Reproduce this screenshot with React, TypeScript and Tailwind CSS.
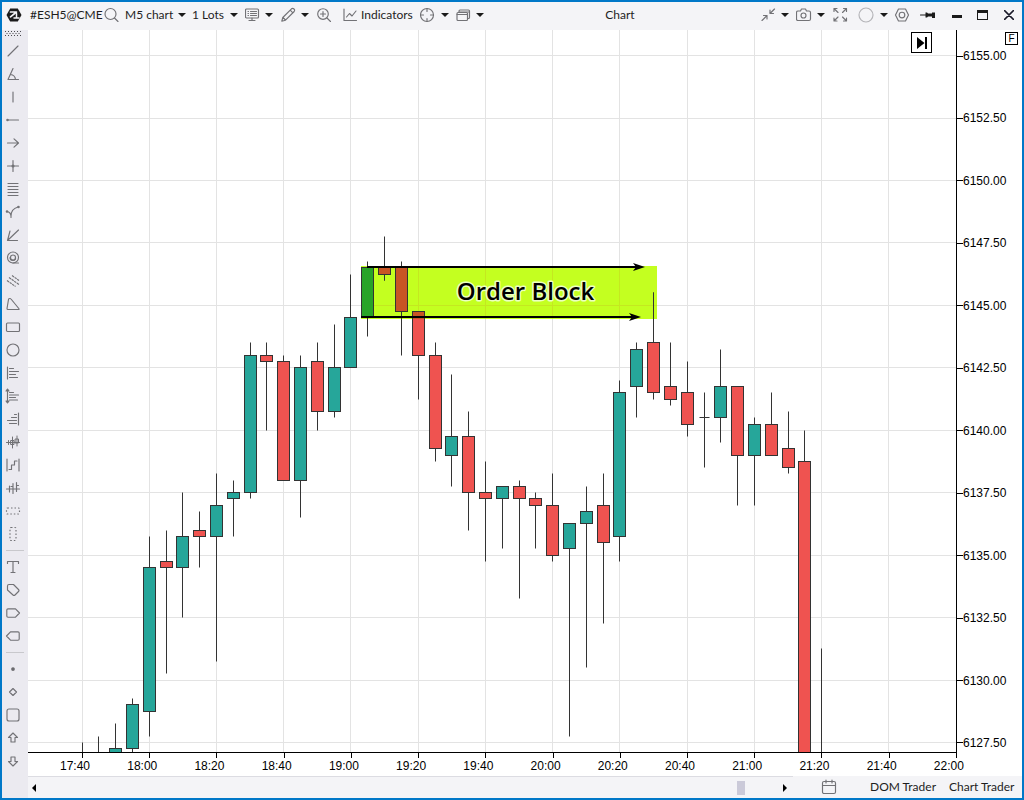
import React from "react";

type Bar = { high: number; top: number; bottom: number; low: number; up: boolean };

const bar = (high: number, top: number, bottom: number, low: number, up = false): Bar => ({
  high,
  top,
  bottom,
  low,
  up,
});

// One five-minute bar per entry, starting at 17:40. Values are y positions on the plot.
const bars: Bar[] = [
  bar(742, 762, 762, 762),
  bar(736, 762, 762, 762),
  bar(723, 748, 762, 762, true),
  bar(698, 704, 748, 762, true),
  bar(536, 567, 711, 736, true),
  bar(530, 561, 567, 673),
  bar(492, 536, 567, 617, true),
  bar(511, 530, 536, 567),
  bar(473, 505, 536, 661, true),
  bar(480, 492, 498, 536, true),
  bar(342, 355, 492, 498, true),
  bar(342, 355, 361, 430),
  bar(355, 361, 480, 480),
  bar(355, 367, 480, 517, true),
  bar(342, 361, 411, 430),
  bar(324, 367, 411, 417, true),
  bar(274, 317, 367, 367, true),
  bar(261, 267, 317, 336, true),
  bar(236, 267, 274, 280),
  bar(261, 267, 311, 355),
  bar(311, 311, 355, 399),
  bar(342, 355, 448, 461),
  bar(374, 436, 455, 486, true),
  bar(411, 436, 492, 530),
  bar(461, 492, 498, 561),
  bar(486, 486, 498, 548, true),
  bar(480, 486, 498, 598),
  bar(492, 498, 505, 548),
  bar(473, 505, 555, 561),
  bar(523, 523, 548, 736, true),
  bar(486, 511, 523, 667, true),
  bar(473, 505, 542, 623),
  bar(380, 392, 536, 561, true),
  bar(342, 349, 386, 417, true),
  bar(292, 342, 392, 399),
  bar(342, 386, 399, 405),
  bar(361, 392, 424, 436),
  bar(392, 417, 417, 467),
  bar(349, 386, 417, 442, true),
  bar(386, 386, 455, 505),
  bar(417, 424, 455, 505, true),
  bar(392, 424, 455, 455),
  bar(411, 448, 467, 473),
  bar(430, 461, 762, 762),
  bar(648, 762, 762, 762),
];

const prices = [
  "6155.00", "6152.50", "6150.00", "6147.50", "6145.00", "6142.50",
  "6140.00", "6137.50", "6135.00", "6132.50", "6130.00", "6127.50",
];

const times = [
  "17:40", "18:00", "18:20", "18:40", "19:00", "19:20", "19:40",
  "20:00", "20:20", "20:40", "21:00", "21:20", "21:40", "22:00",
];

const barX = (index: number) => Math.floor(82.005 + index * 16.812) + 0.5;
const priceY = (index: number) => Math.floor(55.6 + index * 62.44) + 0.5;

function Candles({ up, down }: { up: string; down: string }) {
  return (
    <g stroke="#333333" strokeWidth="1">
      {bars.map((b, i) => {
        const x = barX(i);
        return (
          <g key={i}>
            <line x1={x} x2={x} y1={b.high + 0.5} y2={b.low + 0.5} />
            {b.top === b.bottom ? (
              <line x1={x - 5} x2={x + 5} y1={b.top + 0.5} y2={b.top + 0.5} />
            ) : (
              <rect x={x - 6} y={b.top + 0.5} width="12" height={b.bottom - b.top} fill={b.up ? up : down} />
            )}
          </g>
        );
      })}
    </g>
  );
}

function Plot() {
  return (
    <svg
      viewBox="28 30 928 722"
      preserveAspectRatio="none"
      className="absolute inset-0 h-full w-full"
      role="img"
      aria-label="Five-minute candlestick chart"
    >
      <defs>
        <clipPath id="block">
          <rect x="361" y="266" width="296" height="53" />
        </clipPath>
      </defs>
      <g stroke="#e3e3e3">
        {prices.map((p, i) => (
          <line key={p} x1="28" x2="956" y1={priceY(i)} y2={priceY(i)} />
        ))}
        {times.slice(0, 13).map((t, i) => (
          <line key={t} x1={barX(i * 4)} x2={barX(i * 4)} y1="30" y2="752" />
        ))}
      </g>
      <rect x="361" y="266" width="296" height="53" fill="#c4ff20" />
      <g clipPath="url(#block)" stroke="#c4e820">
        <line x1="361" x2="657" y1={priceY(4)} y2={priceY(4)} />
        {[20, 24, 28, 32].map((i) => (
          <line key={i} x1={barX(i)} x2={barX(i)} y1="266" y2="319" />
        ))}
      </g>
      <Candles up="#26a69a" down="#ef5350" />
      <g clipPath="url(#block)">
        <Candles up="#28a428" down="#c85424" />
      </g>
      <g stroke="#000000" strokeWidth="2">
        <line x1="367" x2="636" y1="267" y2="267" />
        <line x1="361" x2="632" y1="317" y2="317" />
      </g>
      <path d="M645 267l-12-4 3 4-3 4zM641 317l-12-4 3 4-3 4z" />
      <text
        x="525.5"
        y="300"
        textAnchor="middle"
        className="font-['Open_Sans','Noto_Sans',sans-serif] text-[24px] font-semibold"
        fill="#000000"
        stroke="#ecffc0"
        strokeWidth="3"
        strokeLinejoin="round"
        paintOrder="stroke"
      >
        Order Block
      </text>
    </svg>
  );
}

function Icon({ children, className = "h-4 w-4" }: { children: React.ReactNode; className?: string }) {
  return (
    <svg
      viewBox="0 0 16 16"
      className={`shrink-0 ${className}`}
      fill="none"
      stroke="#727276"
      strokeWidth="1.15"
      strokeLinecap="round"
      strokeLinejoin="round"
      aria-hidden="true"
    >
      {children}
    </svg>
  );
}

function Caret({ label, className }: { label: string; className: string }) {
  return (
    <button type="button" aria-label={label} className={`flex h-full items-center ${className}`}>
      <svg viewBox="0 0 8 4" className="h-1 w-2" aria-hidden="true">
        <path d="M0 0h8L4 4z" fill="#1a1a1a" />
      </svg>
    </button>
  );
}

function Tool({ label, className, children }: { label: string; className: string; children: React.ReactNode }) {
  return (
    <button type="button" aria-label={label} className={`flex h-full items-center ${className}`}>
      {children}
    </button>
  );
}

function TitleBar() {
  return (
    <header className="flex h-7 shrink-0 items-center bg-[#f4f4f7] pb-0.5 whitespace-nowrap">
      <div className="flex h-full items-center">
        <div className="flex w-7 items-center pl-1">
          <Icon>
            <path d="M4.200 1.500h7.600l3.700 6.500-3.700 6.500H4.200L.5 8z" fill="#1c1c1c" stroke="none" />
            <path d="M4.500 5h6L4.500 9.800" stroke="#f4f4f7" strokeWidth="1.700" />
            <path d="M10.500 6.500v4.500M8 11h5" stroke="#f4f4f7" strokeWidth="1.500" />
          </Icon>
        </div>
        <span className="w-[74px]">#ESH5@CME</span>
        <Tool label="Search instrument" className="w-[21px]">
          <Icon><circle cx="6.500" cy="7" r="5.500" /><path d="M10.500 11l3.500 3.500" /></Icon>
        </Tool>
        <button type="button" className="w-[53px] text-left">M5 chart</button>
        <Caret label="Choose timeframe" className="w-3.5" />
        <button type="button" className="w-[38px] text-left">1 Lots</button>
        <Caret label="Choose lots" className="w-[15px]" />
        <Tool label="Display" className="w-5">
          <Icon>
            <rect x=".5" y="2" width="13" height="9" rx="1" />
            <path d="M3 4.500h.5M5.500 4.500h6M3 6.500h.5M5.500 6.500h6M3 8.500h.5M5.500 8.500h6M7 11v2.500M4 13.500h6" />
          </Icon>
        </Tool>
        <Caret label="Display options" className="w-4" />
        <Tool label="Draw" className="w-5">
          <Icon><path d="M.8 14.200l1-3.700L10.500 1.800q1.200-1 2.500.2t.2 2.500L4.500 13.200zM9.200 3.200l2.700 2.700M2 10.500l2.500 2.500" /></Icon>
        </Tool>
        <Caret label="Drawing options" className="w-4" />
        <Tool label="Zoom in" className="w-[26px]">
          <Icon><circle cx="6" cy="7" r="5.300" /><path d="M10 11l3.500 3.500M6 4.500v5M3.500 7h5" /></Icon>
        </Tool>
        <button type="button" className="flex w-[77px] items-center gap-0.5">
          <Icon><path d="M1 2v11.500h12.500M3.500 10l3-3.500L9 9l4-5" /></Icon>
          Indicators
        </button>
        <Tool label="Crosshair" className="w-[21px]">
          <Icon><circle cx="7" cy="8" r="6.500" /><path d="M7 1.500v3M7 11.500v3M.5 8h3M10.500 8h3" /></Icon>
        </Tool>
        <Caret label="Crosshair options" className="w-[15px]" />
        <Tool label="Windows" className="w-5">
          <Icon>
            <rect x="1" y="5.500" width="10.500" height="8" rx="1" />
            <path d="M1 7.500h10.500M3 5.500V4q0-1 1-1h8.500q1 0 1 1v6.500q0 1-1 1h-1M3.500 5h10" />
          </Icon>
        </Tool>
        <Caret label="Window options" className="w-[9px]" />
      </div>
      <h1 className="flex-1 pr-1.5 text-center">Chart</h1>
      <div className="flex h-full items-center">
        <Tool label="Collapse" className="w-5">
          <Icon><path d="M1 13.500l5-5M2.500 8.500H6V12M13.500 2L9 6.500M9 3v3.500h3.500" /></Icon>
        </Tool>
        <Caret label="Collapse options" className="w-[15px]" />
        <Tool label="Screenshot" className="w-[21px]">
          <Icon>
            <path d="M2 4h2.500L5.500 2h4l1 2H13q1.500 0 1.500 1.500v6.500q0 1.500-1.500 1.500H2Q.5 13.500.5 12V5.500Q.5 4 2 4z" />
            <circle cx="7.500" cy="8.500" r="2.500" />
          </Icon>
        </Tool>
        <Caret label="Screenshot options" className="w-4" />
        <Tool label="Full screen" className="w-[25px]">
          <Icon>
            <path d="M5 5.500L1 1.500M1 4.500v-3h3M9.500 5.500l4-4M10.500 1.500h3v3M5 10l-4 4M1 11v3h3M9.500 10l4 4M10.500 14h3v-3" />
          </Icon>
        </Tool>
        <Tool label="Link colour" className="w-[22px]">
          <Icon><circle cx="8" cy="8" r="7" stroke="#b4b4b8" /></Icon>
        </Tool>
        <Caret label="Link options" className="w-3.5" />
        <Tool label="Settings" className="w-[26px]">
          <Icon>
            <path d="M4.500 2h7l1 2 2 4-2 4-1 2h-7l-1-2-2-4 2-4z" />
            <circle cx="8" cy="8" r="2.800" />
          </Icon>
        </Tool>
        <Tool label="Pin window" className="w-8">
          <Icon><path d="M.5 8H6" stroke="#1a1a1a" /><path d="M5.500 5.500v5h1.500l1-1h4v1.500h3V5.500h-3v1H8l-1-1z" fill="#1a1a1a" stroke="none" /></Icon>
        </Tool>
        <Tool label="Minimize" className="w-[25px]">
          <span className="mt-0.5 h-[3px] w-2.5 bg-[#1a1a1a]" />
        </Tool>
        <Tool label="Maximize" className="w-[27px]">
          <span className="h-2.5 w-[11px] border border-t-[3px] border-[#1a1a1a]" />
        </Tool>
        <Tool label="Close" className="w-[18px]">
          <Icon className="h-2.5 w-2.5"><path d="M1 1l14 14M15 1L1 15" stroke="#1a1a2a" strokeWidth="2.400" /></Icon>
        </Tool>
      </div>
    </header>
  );
}

const lineTools: [string, React.ReactNode][] = [
  ["Trend line", <path d="M3 13L13 3" />],
  ["Angle", <path d="M8 2.500L3 13.500h10.500M5.500 8.500q4.500.5 5 5" />],
  ["Vertical line", <path d="M8 3v10" />],
  ["Horizontal ray", <><path d="M2.500 8h11" /><circle cx="2.500" cy="8" r=".7" /></>],
  ["Arrow", <path d="M2.500 8h11M9 3.800L13.500 8 9 12.200" />],
  ["Cross", <><path d="M2.500 8h11M8 2.500v11" /><circle cx="8" cy="8" r="1" fill="#707074" /></>],
  ["Fibonacci levels", <path d="M3 2.500h10M3 5.500h10M3 8.500h10M3 11.500h10M3 14.500h10" />],
  ["Pitchfork", <><path d="M2 7.500q3.500.5 4 4.500v1.500M6 12q0-7 7-9" /><circle cx="2" cy="7.500" r=".7" /><circle cx="13.500" cy="3" r=".7" /></>],
  ["Fan", <path d="M2.500 13.500L5 4M2.500 13.500L13.500 3M2.500 13.500H12.500" />],
  ["Spiral", <><circle cx="8" cy="7.500" r="5.500" /><circle cx="8" cy="7.500" r="2.500" /><path d="M10.500 7.500q.5 3-2.500 3t-3-3M8 13h5.500" /></>],
  ["Parallel lines", <path d="M2 7.500l8.500 6M4 4.500l10 7M7 2.500l7 5" strokeDasharray="2.500 .7" strokeLinecap="butt" />],
  ["Triangle", <path d="M4.500 2.500q-.8 0-1 1l-1.500 9q0 1 1 1h10.500q1 0 .3-1L6 3q-.5-.7-1.500-.5z" />],
  ["Rectangle", <rect x="1.500" y="4" width="13" height="8.500" rx="1" />],
  ["Ellipse", <circle cx="8" cy="8" r="6" />],
  ["Volume profile", <path d="M2.500 2v12M4.500 3.500h4M4.500 6.500h9M4.500 9.500h6M4.500 12.500h8" />],
  ["Anchored profile", <><path d="M2.500 2v12M4.500 4.500h4M4.500 7h9M4.500 9.500h6M4.500 12h8" /><path d="M1 3l1.500-2L4 3zM1 13l1.500 2L4 13z" fill="#707074" /></>],
  ["Right profile", <path d="M13.500 2v12M11.500 3.500h-2M11.500 6.500h-5M11.500 9.500h-9M11.500 12.500h-7" />],
  ["Candle pattern", <path d="M1.500 8.500h13M3.500 6.500v4M7.500 3v11M12 2v10M6 6.500h3v4H6zM10.500 5h3v4h-3z" strokeWidth="1" />],
  ["Range steps", <path d="M2 2v12M14 2v12M4 12.500h2.500V8h3V4H12" />],
  ["Bars pattern", <path d="M1.500 9h13M4.500 6v6M8 3.500v10M11.500 2.500v9M6 6.500h2M11.500 5.500h2" />],
  ["Horizontal region", <rect x="1.500" y="5" width="13" height="6" rx="1" strokeDasharray="1.500 2" strokeLinecap="butt" />],
  ["Vertical region", <rect x="5" y="1.500" width="6" height="13" rx="1" strokeDasharray="1.500 2" strokeLinecap="butt" />],
];

const labelTools: [string, React.ReactNode][] = [
  ["Text", <path d="M2.500 4.500v-2h11v2M8 2.500v11M6 13.500h4" />],
  ["Tag", <path d="M2.500 4q0-1.500 1.500-1.500h4.500l5 5q1 1 0 2l-3.500 3.500q-1 1-2 0l-5.500-5z" />],
  ["Label right", <path d="M3 3.800h7.500L14.500 8l-4 4.200H3q-1.200 0-1.200-1.200V5Q1.800 3.800 3 3.800z" />],
  ["Label left", <path d="M13 3.800H5.500L1.500 8l4 4.200H13q1.200 0 1.200-1.200V5q0-1.200-1.200-1.200z" />],
];

const markTools: [string, React.ReactNode][] = [
  ["Dot", <circle cx="8" cy="8" r="1.300" fill="#606064" />],
  ["Diamond", <path d="M8 4.500L11.500 8 8 11.500 4.500 8z" />],
  ["Square", <rect x="2" y="2" width="12" height="12" rx="2" />],
  ["Arrow up", <path d="M8 3l4.500 4.500H10V12H6V7.500H3.500z" />],
  ["Arrow down", <path d="M8 13l4.500-4.500H10V4H6v4.500H3.500z" />],
];

function ToolGroup({ tools }: { tools: [string, React.ReactNode][] }) {
  return (
    <>
      {tools.map(([label, drawing]) => (
        <button key={label} type="button" aria-label={label} className="flex h-[23px] shrink-0 items-center justify-center">
          <Icon>{drawing}</Icon>
        </button>
      ))}
    </>
  );
}

function SideBar() {
  return (
    <nav aria-label="Drawing tools" className="flex w-[26px] shrink-0 flex-col bg-[#ebeaf0] pr-1">
      <svg viewBox="0 0 22 9" className="h-[9px] w-[22px] shrink-0" aria-hidden="true">
        <path d="M3 1.500h17M3 5.500h17" stroke="#4a4a4e" strokeDasharray="1 2" />
        <path d="M4.500 3.500h15" stroke="#4a4a4e" strokeDasharray="1 2" />
      </svg>
      <ToolGroup tools={lineTools} />
      <div className="flex h-2.5 shrink-0 items-center pl-1"><hr className="w-full border-[#c8c8cc]" /></div>
      <ToolGroup tools={labelTools} />
      <div className="flex h-2.5 shrink-0 items-center pl-1"><hr className="w-full border-[#c8c8cc]" /></div>
      <ToolGroup tools={markTools} />
    </nav>
  );
}

function ChartArea() {
  return (
    <section className="flex min-h-0 flex-1 flex-col bg-white font-['Liberation_Sans',Arial,sans-serif] text-black">
      <div className="flex min-h-0 flex-1">
        <div className="relative flex-1">
          <Plot />
          <button
            type="button"
            aria-label="Go to latest bar"
            className="absolute top-0.5 right-6 flex h-[21px] w-[21px] items-center justify-center border border-black bg-white"
          >
            <svg viewBox="0 0 12 12" className="h-3 w-3" aria-hidden="true">
              <path d="M1 0l7.500 6L1 12zM9 0h2v12H9z" />
            </svg>
          </button>
        </div>
        <div className="relative w-[66px] shrink-0 border-l border-black">
          <ol className="flex h-full flex-col justify-between pt-[18px] pb-px">
            {prices.map((p) => (
              <li key={p} className="flex h-4 items-center">
                <span className="h-px w-1.5 bg-black" />
                {p}
              </li>
            ))}
          </ol>
          <button
            type="button"
            className="absolute top-0.5 right-1 flex h-[13px] w-[13px] items-center justify-center border border-black text-[10px] leading-none"
          >
            F
          </button>
        </div>
      </div>
      <div className="h-6 shrink-0">
        <div className="mr-[65px] h-px bg-black" />
        <ol className="flex justify-between pr-[58px] pl-8">
          {times.map((t) => (
            <li key={t} className="w-[30px]">
              <div className="ml-[22px] h-[5px] w-px bg-black" />
              <div className="leading-4">{t}</div>
            </li>
          ))}
        </ol>
      </div>
    </section>
  );
}

function StatusBar() {
  return (
    <footer className="flex h-[22px] shrink-0 items-center bg-[#f4f4f7] pr-2 whitespace-nowrap">
      <div className="flex h-full flex-1 items-center border-t border-[#dcdce2] pr-1.5 pl-1">
        <button type="button" aria-label="Scroll left">
          <svg viewBox="0 0 4 8" className="h-2 w-1" aria-hidden="true"><path d="M4 0v8L0 4z" /></svg>
        </button>
        <div className="flex h-full flex-1 items-center justify-end pr-[38px]">
          <div className="h-3.5 w-2 bg-[#cbcad9]" />
        </div>
        <button type="button" aria-label="Scroll right">
          <svg viewBox="0 0 4 8" className="h-2 w-1" aria-hidden="true"><path d="M0 0v8l4-4z" /></svg>
        </button>
      </div>
      <Tool label="Calendar" className="ml-7 w-[49px]">
        <Icon>
          <rect x="1.500" y="2.500" width="13" height="12" rx="1.500" />
          <path d="M1.500 6.500h13M5 1v3M11 1v3" />
        </Icon>
      </Tool>
      <button type="button" className="w-[79px] text-left">DOM Trader</button>
      <button type="button" className="w-[65px] text-left">Chart Trader</button>
    </footer>
  );
}

export default function App() {
  return (
    <div className="flex h-screen flex-col overflow-hidden border-2 border-[#0078c8] bg-white font-[Lato,'Open_Sans',sans-serif] text-[12px] text-[#1e1e1e]">
      <TitleBar />
      <div className="flex min-h-0 flex-1">
        <SideBar />
        <main className="flex min-w-0 flex-1 flex-col">
          <ChartArea />
          <StatusBar />
        </main>
      </div>
    </div>
  );
}
